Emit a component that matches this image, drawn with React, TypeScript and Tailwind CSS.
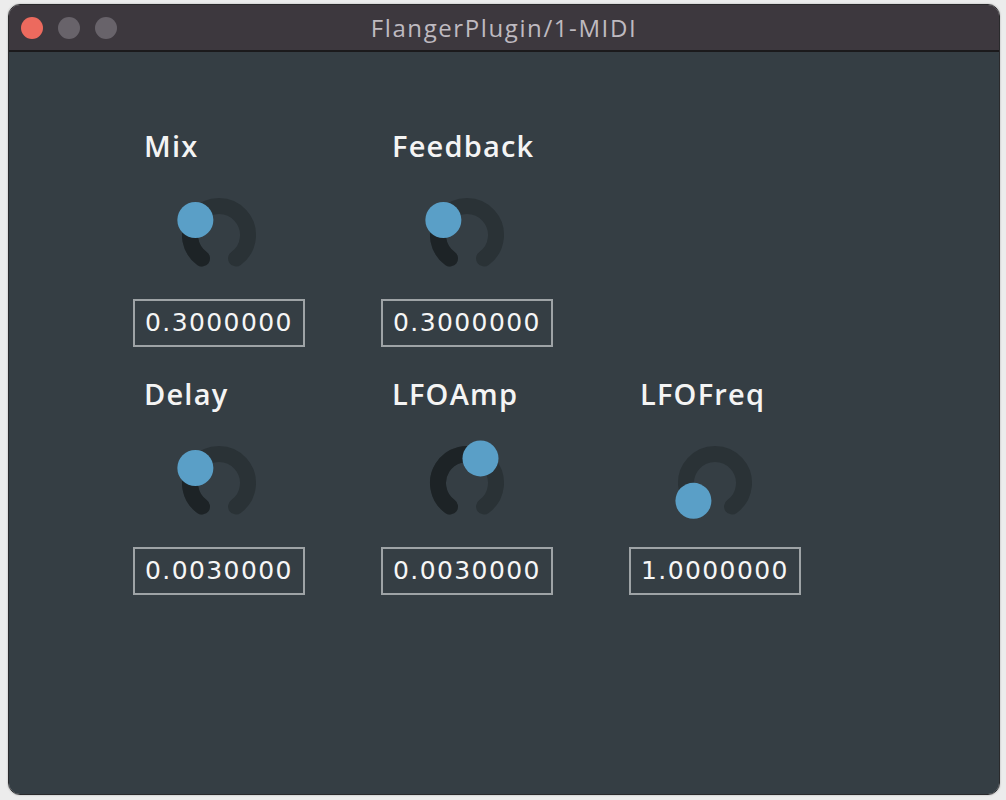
import React from 'react'

type Param = { name: string; value: string; pos: number }

const rows: (Param | null)[][] = [
  [
    { name: 'Mix', value: '0.3000000', pos: 0.3 },
    { name: 'Feedback', value: '0.3000000', pos: 0.3 },
    null,
  ],
  [
    { name: 'Delay', value: '0.0030000', pos: 0.3 },
    { name: 'LFOAmp', value: '0.0030000', pos: 0.6 },
    { name: 'LFOFreq', value: '1.0000000', pos: 0.05 },
  ],
]

const START = -144
const END = 144

// point on circle, angle in degrees clockwise from 12 o'clock
function pt(cx: number, cy: number, r: number, a: number) {
  const rad = (a * Math.PI) / 180
  return [cx + r * Math.sin(rad), cy - r * Math.cos(rad)]
}

function arc(cx: number, cy: number, r: number, a1: number, a2: number) {
  const [x1, y1] = pt(cx, cy, r, a1)
  const [x2, y2] = pt(cx, cy, r, a2)
  const large = a2 - a1 > 180 ? 1 : 0
  return `M ${x1} ${y1} A ${r} ${r} 0 ${large} 1 ${x2} ${y2}`
}

function Knob({ pos }: { pos: number }) {
  const cx = 86
  const cy = 69
  const r = 29
  const angle = START + pos * (END - START)
  const [tx, ty] = pt(cx, cy, r - 1, angle)
  return (
    <svg width="172" height="133" viewBox="0 0 172 133" className="block">
      <path d={arc(cx, cy, r, START, END)} fill="none" stroke="#2a3236" strokeWidth="16" strokeLinecap="round" />
      <path d={arc(cx, cy, r, START, angle)} fill="none" stroke="#1d2326" strokeWidth="16" strokeLinecap="round" />
      <circle cx={tx} cy={ty} r="18" fill="#5a9fc7" />
    </svg>
  )
}

function Cell({ p }: { p: Param | null }) {
  if (!p) return <div className="w-[172px]" />
  return (
    <div className="flex flex-col w-[172px]">
      <div className="h-[40px] pl-[11px] text-[29px] leading-[40px] font-semibold text-[#f4f4f4] font-['Open_Sans',sans-serif] tracking-[1.2px]">
        {p.name}
      </div>
      <Knob pos={p.pos} />
      <div className="h-[48px] border-2 border-[#9ea3a6] pl-[10px] flex items-center text-[25px] text-[#f6f6f6] font-['DejaVu_Sans',sans-serif] tracking-[1.4px]">
        {p.value}
      </div>
    </div>
  )
}

export default function App() {
  return (
    <div className="w-[1006px] h-[800px] bg-[#ececec] pt-[4px] pl-[8px] pr-[6px] pb-[5px]">
      <div className="w-full h-full rounded-[12px] overflow-hidden border border-[#2a2a2c] flex flex-col shadow-[0_0_2px_rgba(0,0,0,0.3)]">
        {/* title bar */}
        <div className="relative h-[47px] bg-[#3d383e] border-b-2 border-[#1b1a1c] flex items-center">
          <div className="flex items-center gap-[15px] pl-[12px]">
            <span className="w-[22px] h-[22px] rounded-full bg-[#ec6a5e]" />
            <span className="w-[22px] h-[22px] rounded-full bg-[#68636a]" />
            <span className="w-[22px] h-[22px] rounded-full bg-[#68636a]" />
          </div>
          <div className="absolute inset-0 flex items-center justify-center text-[24px] text-[#bfbac0] font-['Open_Sans',sans-serif] tracking-[1.6px]">
            FlangerPlugin/1-MIDI
          </div>
        </div>

        {/* content */}
        <div className="flex-1 bg-[#353e44] pl-[124px] pt-[74px]">
          <div className="flex flex-col gap-[27px]">
            {rows.map((row, i) => (
              <div key={i} className="flex gap-[76px]">
                {row.map((p, j) => (
                  <Cell key={j} p={p} />
                ))}
              </div>
            ))}
          </div>
        </div>
      </div>
    </div>
  )
}
